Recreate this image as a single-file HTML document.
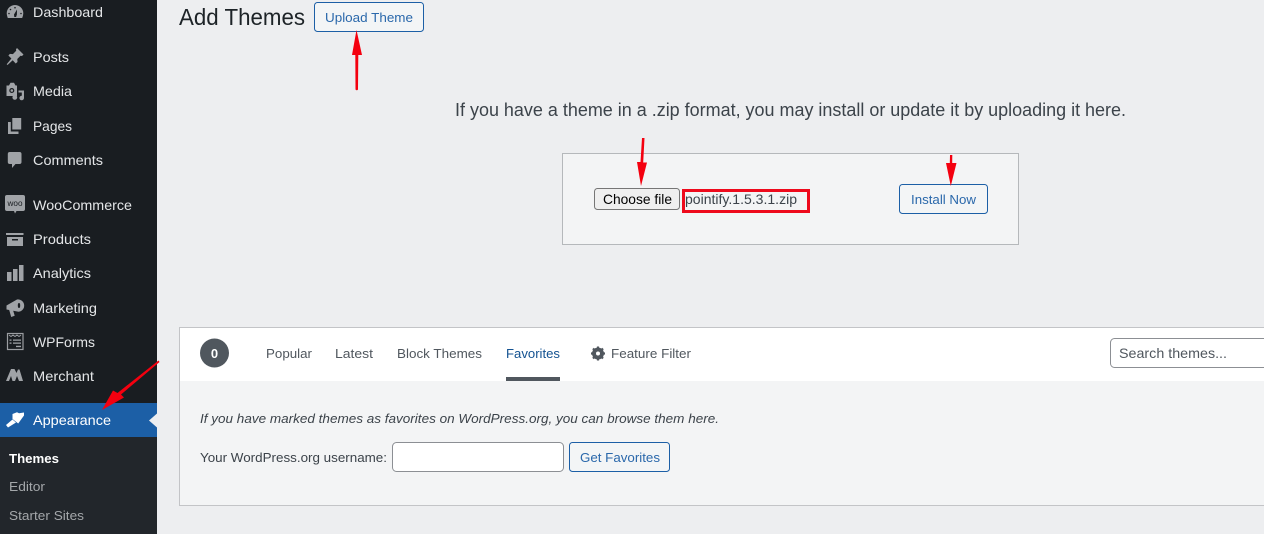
<!DOCTYPE html>
<html lang="en">
<head>
<meta charset="utf-8">
<title>Add Themes</title>
<style>
html,body{margin:0;padding:0;width:1264px;height:534px;overflow:hidden;background:#edeef0}
svg{display:block;position:absolute;left:0;top:0}
text{font-family:"Liberation Sans",sans-serif;white-space:pre}
.m{font-size:14px;fill:#e4e6e8}
.s{font-size:13px;fill:#a4a7aa}
.b{font-size:13px;fill:#2a68ab}
.t{font-size:13px;fill:#50575e}
.i{fill:#a0a3a7}
</style>
</head>
<body>
<svg width="1264" height="534" viewBox="0 0 1264 534" xmlns="http://www.w3.org/2000/svg">
<rect width="1264" height="534" fill="#edeef0"/>
<!-- sidebar -->
<rect width="157" height="534" fill="#191d21"/>
<rect y="403" width="157" height="34" fill="#1c5fa6"/>
<rect y="437" width="157" height="97" fill="#22262b"/>
<path d="M157 413.500L149 420.500L157 427.500Z" fill="#edeef0"/>

<!-- dashboard -->
<path class="i" d="M15 5a8.300 8.300 0 0 0-8 10.500l.8 2.500h14.400l.8-2.500A8.300 8.300 0 0 0 15 5z"/>
<g fill="#191d21"><circle cx="15" cy="7.700" r=".8"/><circle cx="10.500" cy="9.500" r=".8"/><circle cx="9" cy="13.500" r=".8"/><circle cx="21" cy="13.500" r=".8"/><path d="M17 9.500L14 14.500l.3 2.500h1.800l.8-2.500z"/></g>
<!-- posts -->
<path class="i" d="M17 48l6.500 6.500-1.500 1.500-1.500-.3-3.200 3.300.2 3-1.800 1.500-3-3.200L7.500 65l-.8-.7 4.700-5.800-3-3 1.500-1.600 3 .2 3.300-3.400-.2-1.500z"/>
<!-- media -->
<path class="i" d="M6.500 85.500h2.500l1.500-2.800h3.500l1.500 2.800h1.500v10.500h-10.500z"/>
<circle cx="11.800" cy="90.500" r="2.500" fill="#191d21"/><circle cx="11.800" cy="90.500" r="1.300" class="i"/>
<path class="i" d="M18.500 90.500h5.500v7.500a2.300 2.300 0 1 1-2.200-2.300v-3.200h-3.300zM14.800 95a2.400 2.400 0 1 1 0 4.800 2.400 2.400 0 0 1 0-4.800z"/>
<!-- pages -->
<path class="i" d="M12.300 118h8.900v11.500h-8.900z"/>
<path class="i" d="M8 122h2.800v9.500h7.700v2.500H8z"/>
<!-- comments -->
<path class="i" d="M9.800 152h9.700a2 2 0 0 1 2 2v8a2 2 0 0 1-2 2h-4l-3.500 4v-4h-2.200a2 2 0 0 1-2-2v-8a2 2 0 0 1 2-2z"/>
<!-- woo -->
<path class="i" d="M7 195h16a2 2 0 0 1 2 2v12a2 2 0 0 1-2 2h-6.500l-1.500 2.500-1-2.500H7a2 2 0 0 1-2-2v-12a2 2 0 0 1 2-2z"/>
<text x="7.500" y="206" font-size="8.500" fill="#191d21" textLength="15" lengthAdjust="spacingAndGlyphs">woo</text>
<!-- products -->
<rect class="i" x="6" y="233" width="17.500" height="2"/>
<path class="i" d="M7 237h16v9H7z"/><rect x="12" y="239" width="6" height="1.500" fill="#191d21"/>
<!-- analytics -->
<rect class="i" x="7" y="272" width="4.500" height="9"/><rect class="i" x="13" y="269" width="4.500" height="12"/><rect class="i" x="19" y="265" width="4.500" height="16"/>
<!-- marketing -->
<path class="i" d="M6.500 305.500l10.500-6a6.200 6.200 0 1 1 1.500 12.300l-5.300-1 1.500 5-3.500 1.200-2-7-2.700-.5z"/>
<ellipse cx="19" cy="305.500" rx="1.200" ry="2.500" fill="#191d21"/>
<!-- wpforms -->
<rect x="7.500" y="333.500" width="15.500" height="16" fill="none" stroke="#9b9ea2" stroke-width="1.200"/>
<path d="M9 335l2 1.500 2-1.500 2 1.500 2-1.500 2 1.500 2-1.500" fill="none" stroke="#9b9ea2" stroke-width="1"/>
<path class="i" d="M9.500 339.500h2v1.300h-2zM13 339.500h8v1.300h-8zM9.500 342.500h2v1.300h-2zM13 342.500h8v1.300h-8zM16 345.800h5v1.300h-5z"/>
<!-- merchant -->
<path class="i" d="M6 381l5-12h3.500l2 4 1.500-3.500h1.500l3.500 11.500h-4l-2-5-2 5h-2.500l-1.500-5-2 5z"/>
<!-- appearance -->
<path fill="#fff" d="M12.500 414l4.500-1.800 2 1 5-.7v3l-5.800 8-5.700-4.500z"/>
<path fill="#fff" d="M6 425l6.500-5.500 3.500 3L8 427.500z"/>

<g>
<text class="m" x="33" y="17" textLength="70" lengthAdjust="spacingAndGlyphs">Dashboard</text>
<text class="m" x="33" y="62" textLength="36" lengthAdjust="spacingAndGlyphs">Posts</text>
<text class="m" x="33" y="96" textLength="39" lengthAdjust="spacingAndGlyphs">Media</text>
<text class="m" x="33" y="131" textLength="39" lengthAdjust="spacingAndGlyphs">Pages</text>
<text class="m" x="33" y="165" textLength="70" lengthAdjust="spacingAndGlyphs">Comments</text>
<text class="m" x="33" y="210" textLength="99" lengthAdjust="spacingAndGlyphs">WooCommerce</text>
<text class="m" x="33" y="244" textLength="58" lengthAdjust="spacingAndGlyphs">Products</text>
<text class="m" x="33" y="278" textLength="58" lengthAdjust="spacingAndGlyphs">Analytics</text>
<text class="m" x="33" y="313" textLength="64" lengthAdjust="spacingAndGlyphs">Marketing</text>
<text class="m" x="33" y="347" textLength="62" lengthAdjust="spacingAndGlyphs">WPForms</text>
<text class="m" x="33" y="381" textLength="61" lengthAdjust="spacingAndGlyphs">Merchant</text>
<text class="m" x="33" y="425" textLength="78" lengthAdjust="spacingAndGlyphs" style="fill:#fff">Appearance</text>
<text class="s" x="9" y="463" font-weight="bold" textLength="50" lengthAdjust="spacingAndGlyphs" style="fill:#fff">Themes</text>
<text class="s" x="9" y="491" textLength="36" lengthAdjust="spacingAndGlyphs">Editor</text>
<text class="s" x="9" y="520" textLength="75" lengthAdjust="spacingAndGlyphs">Starter Sites</text>
</g>

<!-- header -->
<text x="179" y="25" font-size="23" fill="#1d2327" textLength="126" lengthAdjust="spacingAndGlyphs">Add Themes</text>
<rect x="314.500" y="2.500" width="109" height="29" rx="3" fill="#f3f5f6" stroke="#1c5fa6"/>
<text class="b" x="325" y="22" textLength="88" lengthAdjust="spacingAndGlyphs">Upload Theme</text>

<text x="455" y="116" font-size="18" fill="#3c434a" textLength="671" lengthAdjust="spacingAndGlyphs">If you have a theme in a .zip format, you may install or update it by uploading it here.</text>

<!-- upload box -->
<rect x="562.500" y="153.500" width="456" height="91" fill="#f3f4f5" stroke="#b5b8bb"/>
<rect x="594.500" y="188.500" width="85" height="21" rx="3" fill="#efefef" stroke="#767676"/>
<text x="603" y="204" font-size="14" fill="#000" textLength="69" lengthAdjust="spacingAndGlyphs">Choose file</text>
<text x="685" y="204" font-size="14" fill="#3c434a" textLength="112" lengthAdjust="spacingAndGlyphs">pointify.1.5.3.1.zip</text>
<rect x="683.500" y="190.500" width="125" height="21" fill="none" stroke="#ee0a1c" stroke-width="3"/>
<rect x="899.500" y="184.500" width="88" height="29" rx="3" fill="#f3f5f6" stroke="#1c5fa6"/>
<text class="b" x="911" y="204" textLength="65" lengthAdjust="spacingAndGlyphs">Install Now</text>

<!-- panel -->
<rect x="179.500" y="327.500" width="1100" height="178" fill="#f3f4f5" stroke="#c3c4c7"/>
<rect x="180" y="328" width="1090" height="53" fill="#fff"/>
<circle cx="214.500" cy="353" r="14.500" fill="#50575e"/>
<text x="214.500" y="358" font-size="13" font-weight="bold" fill="#fff" text-anchor="middle">0</text>
<text class="t" x="266" y="358" textLength="46" lengthAdjust="spacingAndGlyphs">Popular</text>
<text class="t" x="335" y="358" textLength="38" lengthAdjust="spacingAndGlyphs">Latest</text>
<text class="t" x="397" y="358" textLength="85" lengthAdjust="spacingAndGlyphs">Block Themes</text>
<text x="506" y="358" font-size="13" fill="#135291" textLength="54" lengthAdjust="spacingAndGlyphs">Favorites</text>
<rect x="506" y="377" width="54" height="4" fill="#50575e"/>
<circle cx="598" cy="353.500" r="4.500" fill="none" stroke="#50575e" stroke-width="3"/>
<path d="M598 346.500v14M591 353.500h14M593 348.500l10 10M603 348.500l-10 10" stroke="#50575e" stroke-width="2.200"/>
<circle cx="598" cy="353.500" r="2" fill="#fff"/>
<text class="t" x="611" y="358" textLength="80" lengthAdjust="spacingAndGlyphs">Feature Filter</text>

<rect x="1110.500" y="338.500" width="170" height="29" rx="4" fill="#fff" stroke="#8c8f94"/>
<text x="1119" y="358" font-size="14" fill="#50575e" textLength="108" lengthAdjust="spacingAndGlyphs">Search themes...</text>

<text x="200" y="423" font-size="13" font-style="italic" fill="#3c434a" textLength="519" lengthAdjust="spacingAndGlyphs">If you have marked themes as favorites on WordPress.org, you can browse them here.</text>
<text x="200" y="462" font-size="13" fill="#3c434a" textLength="187" lengthAdjust="spacingAndGlyphs">Your WordPress.org username:</text>
<rect x="392.500" y="442.500" width="171" height="29" rx="4" fill="#fff" stroke="#8c8f94"/>
<rect x="569.500" y="442.500" width="100" height="29" rx="3" fill="#f3f5f6" stroke="#1c5fa6"/>
<text class="b" x="580" y="462" textLength="80" lengthAdjust="spacingAndGlyphs">Get Favorites</text>

<!-- red arrows -->
<g fill="#f4000f" stroke="none">
<path d="M355.500 89L355.300 55H352L356.500 30 362 55h-3.700l-.3 34a1.250 1.250 0 0 1-2.500 0z"/>
<path d="M642 138h2.500l-1.300 24.500H647L641 186 637 162h3.500z"/>
<path d="M950 155h2.300l-.1 8h4.300L950.800 186 946 163h3.800z"/>
<path d="M158.500 360.500l1 1.500-38.500 32.500 3 3L102 410l11-19.500 4.500 2.500z"/>
</g>
</svg>
</body>
</html>
